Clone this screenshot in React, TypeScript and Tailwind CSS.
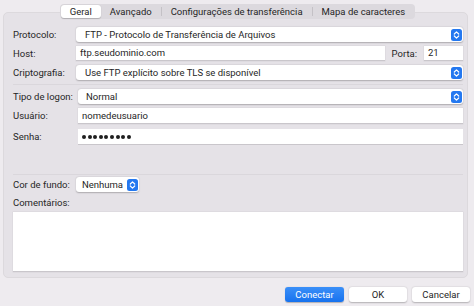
import type { ReactNode } from "react";

const font = { fontFamily: "Roboto, 'Noto Sans', sans-serif" };

const Stepper = () => (
  <svg width="11" height="12" viewBox="0 0 11 12" className="shrink-0">
    <rect x="0" y="0" width="11" height="12" rx="2.5" fill="#2478f0" />
    <path d="M3.3 5 L5.5 2.9 L7.7 5" fill="none" stroke="#fff" strokeWidth="1.2" strokeLinecap="round" strokeLinejoin="round" />
    <path d="M3.3 7 L5.5 9.1 L7.7 7" fill="none" stroke="#fff" strokeWidth="1.2" strokeLinecap="round" strokeLinejoin="round" />
  </svg>
);

const Select = ({ value, className = "" }: { value: string; className?: string }) => (
  <div
    className={`flex h-[15px] items-center justify-between gap-[2px] rounded-[3px] bg-white pr-[1px] shadow-[0_0.5px_1.5px_rgba(0,0,0,0.25)] ${className}`}
  >
    <span className="leading-none whitespace-nowrap">{value}</span>
    <Stepper />
  </div>
);

const Input = ({ value, className = "" }: { value: string; className?: string }) => (
  <div
    className={`flex h-[15px] items-center border-b border-[#c9c6cb] bg-white pl-[4px] shadow-[0_0_0_0.5px_rgba(0,0,0,0.06)] ${className}`}
  >
    <span className="leading-none">{value}</span>
  </div>
);

const Row = ({ label, children, className = "", labelWidth = "w-[63px]" }: { label: string; children: ReactNode; className?: string; labelWidth?: string }) => (
  <div className={`flex items-center ${className}`}>
    <span className={`${labelWidth} shrink-0 leading-none whitespace-nowrap`}>{label}</span>
    {children}
  </div>
);

const tabs = ["Geral", "Avançado", "Configurações de transferência", "Mapa de caracteres"];

export default function App() {
  return (
    <div
      className="flex h-[306px] w-[474px] flex-col overflow-hidden bg-[#eeebef] text-[9.5px] text-[#262626]"
      style={font}
    >
      <div className="relative z-10 mt-[4px] flex h-[15px] justify-center">
        <div className="ml-[1px] flex items-center rounded-[4px] bg-[#dcd9de] p-[1px]">
          {tabs.map((tab, i) => (
            <div key={tab} className="flex h-[13px] items-center">
              {i > 1 && <span className="h-[9px] w-px bg-[#c4c1c6]" />}
              <span
                className={`flex h-[13px] items-center px-[9px] leading-none whitespace-nowrap ${
                  i === 0 ? "rounded-[3px] bg-white shadow-[0_0.5px_1px_rgba(0,0,0,0.2)]" : ""
                }`}
              >
                {tab}
              </span>
            </div>
          ))}
        </div>
      </div>

      <div className="-mt-[7px] mr-[6px] ml-[3px] flex h-[266px] flex-col rounded-[5px] border border-[#dcd9dd] bg-[#e5e2e7] pt-[14px] pr-[4px] pl-[9px]">
        <div className="flex flex-col gap-[4px]">
          <Row label="Protocolo:">
            <Select value="FTP - Protocolo de Transferência de Arquivos" className="flex-1 pl-[9px]" />
          </Row>
          <Row label="Host:">
            <Input value="ftp.seudominio.com" className="flex-1" />
            <span className="mr-[7px] ml-[7px] leading-none">Porta:</span>
            <Input value="21" className="w-[39px]" />
          </Row>
          <Row label="Criptografia:">
            <Select value="Use FTP explícito sobre TLS se disponível" className="flex-1 pl-[9px]" />
          </Row>
        </div>

        <div className="mt-[4px] h-px bg-[#dad7dc]" />

        <div className="mt-[4px] flex flex-col">
          <Row label="Tipo de logon:" labelWidth="w-[65px]">
            <Select value="Normal" className="flex-1 pl-[8px]" />
          </Row>
          <Row label="Usuário:" labelWidth="w-[65px]" className="mt-[4px]">
            <Input value="nomedeusuario" className="h-[16px] flex-1" />
          </Row>
          <Row label="Senha:" labelWidth="w-[65px]" className="mt-[5px]">
            <div className="flex h-[16px] flex-1 items-center gap-[1.6px] border-b border-[#c9c6cb] bg-white pl-[4px]">
              {Array.from({ length: 9 }, (_, i) => (
                <span key={i} className="h-[4px] w-[4px] rounded-full bg-[#1f1f1f]" />
              ))}
            </div>
          </Row>
        </div>

        <div className="mt-[29px] h-px bg-[#dad7dc]" />

        <Row label="Cor de fundo:" className="mt-[2px]">
          <Select value="Nenhuma" className="w-[63px] shrink-0 pl-[6px]" />
        </Row>

        <span className="mt-[6px] leading-none">Comentários:</span>
        <div className="mt-[4px] h-[60px] border-b border-[#c9c6cb] bg-white shadow-[0_0_0_0.5px_rgba(0,0,0,0.06)]" />
      </div>

      <div className="mt-[9px] flex justify-end gap-[5px] pr-[4px]">
        <button className="flex h-[15px] w-[59px] items-center justify-center rounded-[3px] bg-gradient-to-b from-[#3a8ff8] to-[#1672ee] leading-none text-white shadow-[0_0.5px_1px_rgba(0,0,0,0.25)]">
          Conectar
        </button>
        <button className="flex h-[15px] w-[58px] items-center justify-center rounded-[3px] bg-white leading-none shadow-[0_0.5px_1.5px_rgba(0,0,0,0.25)]">
          OK
        </button>
        <button className="flex h-[15px] w-[58px] items-center justify-center rounded-[3px] bg-white leading-none shadow-[0_0.5px_1.5px_rgba(0,0,0,0.25)]">
          Cancelar
        </button>
      </div>
    </div>
  );
}
